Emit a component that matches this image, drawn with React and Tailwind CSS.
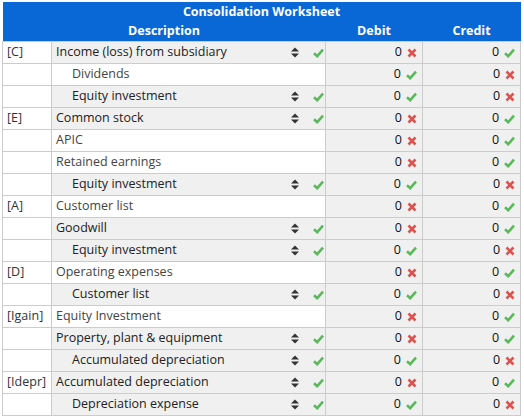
const rows = [
  { tag: "[C]", text: "Income (loss) from subsidiary", indent: false, select: true, debit: false, credit: true },
  { tag: "", text: "Dividends", indent: true, select: false, debit: true, credit: false },
  { tag: "", text: "Equity investment", indent: true, select: true, debit: true, credit: false },
  { tag: "[E]", text: "Common stock", indent: false, select: true, debit: false, credit: true },
  { tag: "", text: "APIC", indent: false, select: false, debit: false, credit: true },
  { tag: "", text: "Retained earnings", indent: false, select: false, debit: false, credit: true },
  { tag: "", text: "Equity investment", indent: true, select: true, debit: true, credit: false },
  { tag: "[A]", text: "Customer list", indent: false, select: false, debit: false, credit: true },
  { tag: "", text: "Goodwill", indent: false, select: true, debit: false, credit: true },
  { tag: "", text: "Equity investment", indent: true, select: true, debit: true, credit: false },
  { tag: "[D]", text: "Operating expenses", indent: false, select: false, debit: false, credit: true },
  { tag: "", text: "Customer list", indent: true, select: true, debit: true, credit: false },
  { tag: "[Igain]", text: "Equity Investment", indent: false, select: false, debit: false, credit: true },
  { tag: "", text: "Property, plant & equipment", indent: false, select: true, debit: false, credit: true },
  { tag: "", text: "Accumulated depreciation", indent: true, select: true, debit: true, credit: false },
  { tag: "[Idepr]", text: "Accumulated depreciation", indent: false, select: true, debit: false, credit: true },
  { tag: "", text: "Depreciation expense", indent: true, select: true, debit: true, credit: false },
];

function Check() {
  return (
    <svg width="11" height="10" viewBox="0 0 11 10" className="shrink-0">
      <path d="M1 5.2 L4.2 8.2 L10 1.6" fill="none" stroke="#5cb85c" strokeWidth="2.6" />
    </svg>
  );
}

function Cross() {
  return (
    <svg width="10" height="10" viewBox="0 0 10 10" className="shrink-0">
      <path d="M1.5 1.5 L8.5 8.5 M8.5 1.5 L1.5 8.5" fill="none" stroke="#d9534f" strokeWidth="2.6" />
    </svg>
  );
}

function Mark({ ok }) {
  return ok ? <Check /> : <Cross />;
}

function SortArrows() {
  return (
    <svg width="8" height="11" viewBox="0 0 8 11" className="shrink-0">
      <path d="M0 4.5 L4 0.5 L8 4.5 Z M0 6.5 L4 10.5 L8 6.5 Z" fill="#333" />
    </svg>
  );
}

export default function App() {
  return (
    <div className="w-[524px] h-[419px] bg-white pt-[2px] pl-[2px] font-['Open_Sans',sans-serif] text-[12.5px]">
      <table className="table-fixed border-collapse w-[518px]">
        <colgroup>
          <col className="w-[49px]" />
          <col className="w-[274px]" />
          <col className="w-[97px]" />
          <col className="w-[98px]" />
        </colgroup>
        <thead className="bg-[#0a68d6] text-white font-bold text-[12.5px]">
          <tr>
            <th colSpan={4} className="h-[19px] p-0 text-center leading-[19px]">Consolidation Worksheet</th>
          </tr>
          <tr>
            <th colSpan={2} className="h-[20px] p-0 text-center leading-[20px]">Description</th>
            <th className="h-[20px] p-0 text-center leading-[20px]">Debit</th>
            <th className="h-[20px] p-0 text-center leading-[20px]">Credit</th>
          </tr>
        </thead>
        <tbody>
          {rows.map((r, i) => (
            <tr key={i} className="h-[22px]">
              <td className="border border-[#cccccc] bg-white px-[4px] py-0 text-[#333]">{r.tag}</td>
              <td className={`border border-[#cccccc] py-0 pr-0 ${r.select ? "bg-[#f0f0f0] text-[#222]" : "bg-white text-[#444]"} ${r.indent ? "pl-[20px]" : "pl-[4px]"}`}>
                <div className="flex items-center">
                  <span className="flex-1 whitespace-nowrap">{r.text}</span>
                  {r.select && (
                    <div className="flex items-center gap-[14px] pr-[1px]">
                      <SortArrows />
                      <Check />
                    </div>
                  )}
                </div>
              </td>
              <td className="border border-[#cccccc] bg-[#f0f0f0] py-0 pl-0 pr-[5px] text-[#111]">
                <div className="flex items-center justify-end gap-[5px]">
                  <span>0</span>
                  <Mark ok={r.debit} />
                </div>
              </td>
              <td className="border border-[#cccccc] bg-[#f0f0f0] py-0 pl-0 pr-[5px] text-[#111]">
                <div className="flex items-center justify-end gap-[5px]">
                  <span>0</span>
                  <Mark ok={r.credit} />
                </div>
              </td>
            </tr>
          ))}
        </tbody>
      </table>
    </div>
  );
}
